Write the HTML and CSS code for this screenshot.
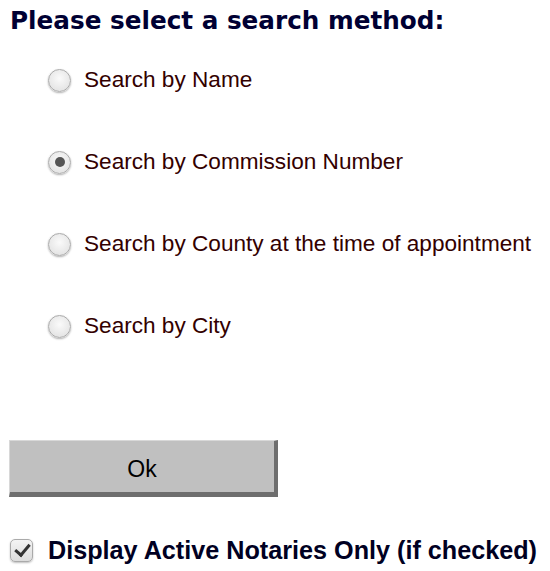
FILE: index.html
```html
<!DOCTYPE html>
<html>
<head>
<meta charset="utf-8">
<link rel="stylesheet" href="styles.css">
</head>
<body>
<form class="search-form">
  <h2 class="title">Please select a search method:</h2>
  <div class="options">
    <label class="option"><input type="radio" name="m" class="radio"><span>Search by Name</span></label>
    <label class="option"><input type="radio" name="m" class="radio" checked><span>Search by Commission Number</span></label>
    <label class="option"><input type="radio" name="m" class="radio"><span>Search by County at the time of appointment</span></label>
    <label class="option"><input type="radio" name="m" class="radio"><span>Search by City</span></label>
  </div>
  <button type="button" class="ok">Ok</button>
  <label class="active"><input type="checkbox" class="check" checked><span>Display Active Notaries Only (if checked)</span></label>
</form>
</body>
</html>
```

FILE: styles.css
```css
html, body { margin: 0; padding: 0; background: #fff; }
.search-form { padding: 6px 0 0 10px; display: flex; flex-direction: column; align-items: flex-start; }
.title {
  margin: 0;
  font-family: "DejaVu Sans", Verdana, sans-serif;
  font-weight: bold;
  font-size: 24.7px;
  line-height: 30px;
  color: #000033;
}
.options { display: flex; flex-direction: column; gap: 50px; padding: 28px 0 0 38px; }
.option {
  display: flex; align-items: center; gap: 13px;
  font-family: "Liberation Sans", Arial, sans-serif;
  font-size: 22.6px; line-height: 32px; color: #330000;
}
.radio {
  appearance: none; -webkit-appearance: none; margin: 0;
  width: 23px; height: 23px; border-radius: 50%;
  background: radial-gradient(circle at 50% 40%, #fafafa 0%, #e6e6e6 70%, #d8d8d8 100%);
  border: 1px solid #aaa;
  box-shadow: 0 1px 2px rgba(0,0,0,0.3);
  box-sizing: border-box; position: relative;
}
.radio:checked::after {
  content: ""; position: absolute; left: 5.5px; top: 5.5px; width: 10px; height: 10px;
  border-radius: 50%; background: #555;
}
.ok {
  margin-top: 98px;
  width: 269px; height: 57px;
  background: #c0c0c0;
  border-style: solid; border-color: #d8d8d8 #6e6e6e #6e6e6e #d8d8d8;
  border-width: 1px 4px 5px 1px;
  font-family: "Liberation Sans", Arial, sans-serif;
  font-size: 23px; color: #000;
  padding: 6px 0 0 0; margin-left: -1px;
}
.active {
  margin-top: 38px;
  display: flex; align-items: center; gap: 15px;
  font-family: "Liberation Sans", Arial, sans-serif;
  font-weight: bold; font-size: 25.2px; line-height: 30px; color: #000022;
}
.check {
  appearance: none; -webkit-appearance: none; margin: 0;
  width: 23px; height: 23px; border-radius: 5px;
  background: linear-gradient(#f4f4f4, #dcdcdc);
  border: 1px solid #aaa; box-sizing: border-box; position: relative;
  box-shadow: 0 1px 2px rgba(0,0,0,0.25);
}
.check:checked::after {
  content: ""; position: absolute; left: 6.5px; top: 1px; width: 6px; height: 12px;
  border: solid #333; border-width: 0 3.5px 3.5px 0; transform: rotate(40deg);
}
```
